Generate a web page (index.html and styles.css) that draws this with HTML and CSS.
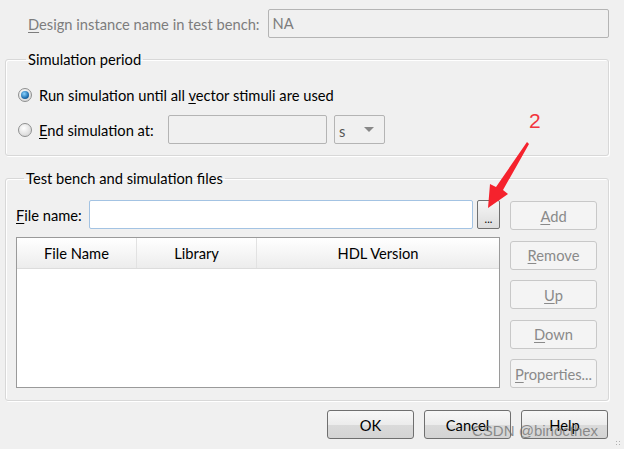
FILE: index.html
```html
<!DOCTYPE html>
<html lang="en">
<head>
<meta charset="UTF-8">
<title>Test Bench Settings</title>
<link rel="stylesheet" href="styles.css">
</head>
<body>
<div class="dialog">

  <div class="instance-row">
    <span class="label disabled"><u>D</u>esign instance name in test bench:</span>
    <div class="textbox disabled-box">NA</div>
  </div>

  <fieldset class="group period">
    <legend>Simulation period</legend>
    <div class="radio-row">
      <span class="radio checked"></span>
      <span class="label">Run simulation until all <u>v</u>ector stimuli are used</span>
    </div>
    <div class="radio-row">
      <span class="radio"></span>
      <span class="label end-label"><u>E</u>nd simulation at:</span>
      <div class="textbox time-box"></div>
      <div class="combo">s<span class="combo-arrow"></span></div>
    </div>
  </fieldset>

  <fieldset class="group files">
    <legend>Test bench and simulation files</legend>
    <div class="files-body">
      <div class="files-left">
        <div class="file-row">
          <span class="label"><u>F</u>ile name:</span>
          <div class="textbox file-box"></div>
          <button class="browse">...</button>
        </div>
        <div class="table">
          <div class="table-head">
            <div class="col col-name">File Name</div>
            <div class="col col-lib">Library</div>
            <div class="col col-hdl">HDL Version</div>
          </div>
        </div>
      </div>
      <div class="side-buttons">
        <button class="btn off"><u>A</u>dd</button>
        <button class="btn off"><u>R</u>emove</button>
        <button class="btn off"><u>U</u>p</button>
        <button class="btn off"><u>D</u>own</button>
        <button class="btn off"><u>P</u>roperties...</button>
      </div>
    </div>
  </fieldset>

  <div class="footer">
    <button class="btn main">OK</button>
    <button class="btn main">Cancel</button>
    <button class="btn main">Help</button>
  </div>

  <!-- annotation drawn over the screenshot -->
  <span class="mark-num">2</span>
  <svg class="mark-arrow" width="60" height="80" viewBox="0 0 60 80">
    <path d="M51 2 L53 4 L27 50 L32 54 L12 68 L14 44 L20 47 Z" fill="#f5222d"/>
  </svg>

  <span class="watermark">CSDN @binocthex</span>
  <span class="grip"></span>
</div>
</body>
</html>
```

FILE: styles.css
```css
html, body {
  margin: 0;
  padding: 0;
}

body {
  background-color: #f0f0f0;
  font-family: "Lato", "Noto Sans", sans-serif;
  font-size: 14.7px;
  color: #000;
}

.dialog {
  position: relative;
  width: 624px;
  height: 449px;
  overflow: hidden;
  box-sizing: border-box;
  padding: 9px 15px 0 5px;
}

u {
  text-decoration: underline;
  text-underline-offset: 2px;
}

.label {
  white-space: nowrap;
}

.disabled {
  color: #7d7d7d;
}

.textbox {
  box-sizing: border-box;
  height: 29px;
  border: 1px solid #acacac;
  border-radius: 2px;
  background-color: #fff;
  line-height: 27px;
  padding-left: 4px;
}

.disabled-box {
  background-color: #f0f0f0;
  color: #7d7d7d;
  border-color: #b4b4b4;
}

/* top row */
.instance-row {
  display: flex;
  align-items: center;
  padding-left: 23px;
  gap: 8px;
}

.instance-row .textbox {
  flex: 1;
}

/* group boxes */
.group {
  margin: 0;
  padding: 0;
  border: 1px solid #d8d8d8;
  border-radius: 3px;
  box-shadow: inset 1px 1px 0 #fff, 1px 1px 0 #fff;
}

.group legend {
  margin-left: 8px;
  padding: 0 2px;
  font-size: 14.7px;
  line-height: 18px;
}

.period {
  margin-top: 12px;
  height: 106px;
  box-sizing: border-box;
  padding: 12px 0 0 12px;
}

.radio-row {
  display: flex;
  align-items: center;
  height: 29px;
  margin-bottom: 6px;
}

.radio {
  box-sizing: border-box;
  width: 14px;
  height: 14px;
  border-radius: 50%;
  border: 1px solid #8e8f8f;
  background: radial-gradient(circle at 40% 35%, #ffffff, #dcdcdc 70%);
  margin-right: 7px;
  position: relative;
}

.radio.checked::after {
  content: "";
  position: absolute;
  left: 2px;
  top: 2px;
  width: 8px;
  height: 8px;
  border-radius: 50%;
  background: radial-gradient(circle at 40% 35%, #8ad3ff, #1f6fb0 60%, #0b3c6b);
}

.end-label {
  width: 129px;
}

.time-box {
  width: 159px;
  background-color: #f0f0f0;
  border-color: #b4b4b4;
}

.combo {
  position: relative;
  box-sizing: border-box;
  width: 51px;
  height: 29px;
  margin-left: 7px;
  border: 1px solid #b4b4b4;
  border-radius: 2px;
  padding-left: 4px;
  line-height: 30px;
  color: #555;
}

.combo-arrow {
  position: absolute;
  right: 10px;
  top: 11px;
  border-left: 5px solid transparent;
  border-right: 5px solid transparent;
  border-top: 5px solid #888;
}

/* files group */
.files {
  margin-top: 13px;
  height: 232px;
  box-sizing: border-box;
  padding: 13px 0 0 10px;
}

.files-body {
  display: flex;
  gap: 10px;
}

.files-left {
  width: 484px;
}

.file-row {
  display: flex;
  align-items: center;
  gap: 4px;
}

.file-row .label {
  width: 69px;
}

.file-box {
  width: 384px;
  border-color: #a3c3e3;
}

.browse {
  box-sizing: border-box;
  width: 23px;
  height: 29px;
  padding: 0;
  border: 1px solid #707070;
  border-radius: 2px;
  background: linear-gradient(#f6f6f6, #dcdcdc);
  font-family: inherit;
  font-size: 11px;
  line-height: 36px;
}

.table {
  box-sizing: border-box;
  margin-top: 8px;
  height: 151px;
  border: 1px solid #9a9a9a;
  background-color: #fff;
}

.table-head {
  display: flex;
  height: 30px;
  border-bottom: 1px solid #dcdcdc;
  background: linear-gradient(#ffffff, #f4f4f4 60%, #ececec);
}

.col {
  box-sizing: border-box;
  text-align: center;
  line-height: 31px;
  border-right: 1px solid #e2e2e2;
}

.col-name {
  width: 120px;
}

.col-lib {
  width: 120px;
}

.col-hdl {
  flex: 1;
  border-right: none;
}

.side-buttons {
  display: flex;
  flex-direction: column;
  gap: 10.5px;
  padding-top: 1px;
}

/* buttons */
.btn {
  box-sizing: border-box;
  width: 87px;
  height: 29px;
  padding: 0;
  font-family: inherit;
  font-size: 14.7px;
  border-radius: 3px;
}

.btn.off {
  border: 1px solid #c8c8c8;
  background-color: #f4f4f4;
  color: #8a8a8a;
}

.btn.main {
  border: 1px solid #6f6f6f;
  background: linear-gradient(#f7f7f7, #ececec 50%, #dadada 51%, #d4d4d4);
  color: #000;
}

.footer {
  display: flex;
  justify-content: flex-end;
  gap: 10px;
  margin-top: 9px;
  margin-right: 1px;
}

/* overlays */
.mark-num {
  position: absolute;
  left: 529px;
  top: 109px;
  color: #f2343d;
  font-family: "Liberation Sans", sans-serif;
  font-size: 21px;
}

.mark-arrow {
  position: absolute;
  left: 476px;
  top: 140px;
}

.watermark {
  position: absolute;
  left: 472px;
  top: 422px;
  font-family: "Liberation Sans", sans-serif;
  font-size: 15px;
  color: rgba(110, 110, 110, 0.75);
}

.grip {
  position: absolute;
  right: 3px;
  bottom: 3px;
  width: 6px;
  height: 6px;
  background: radial-gradient(circle, #b0b0b0 1px, transparent 1px) 0 0 / 3px 3px;
}
```
